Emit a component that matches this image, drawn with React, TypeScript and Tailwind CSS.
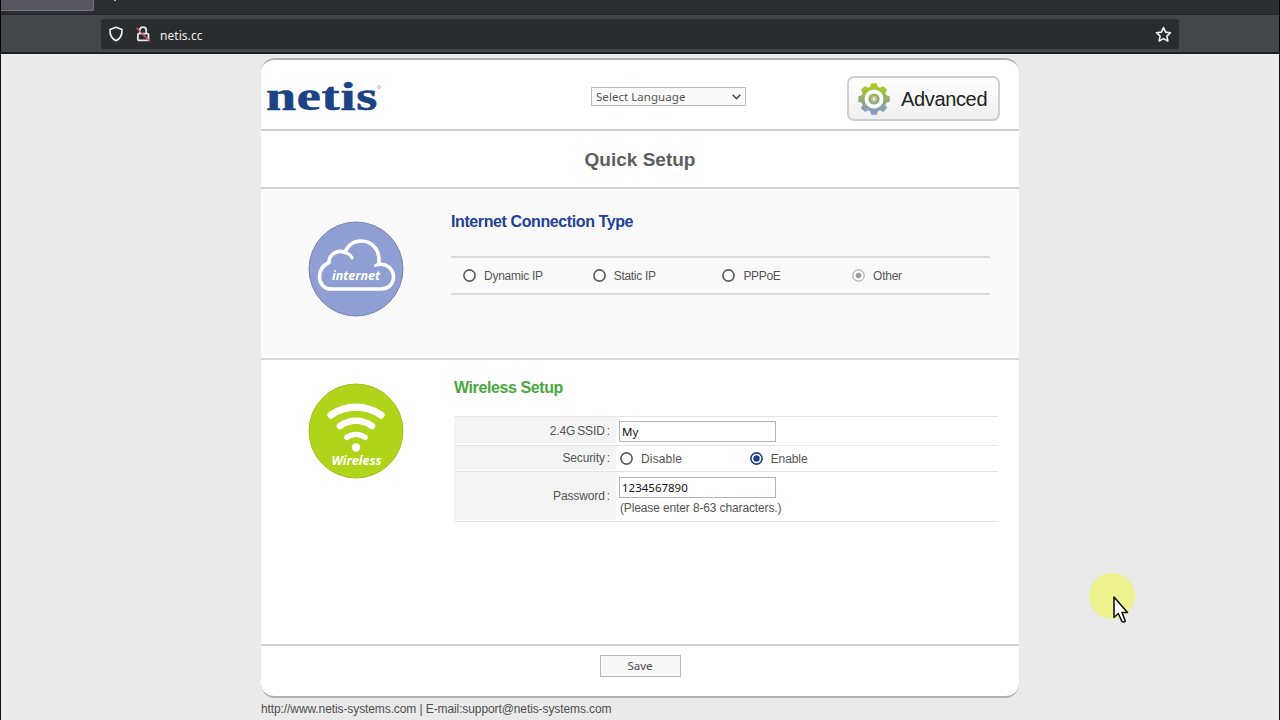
import { useState } from "react";

const connectionTypes = [
  { id: "dynamic", label: "Dynamic IP", tracking: "tracking-[-0.25px]" },
  { id: "static", label: "Static IP", tracking: "tracking-[-0.3px]" },
  { id: "pppoe", label: "PPPoE", tracking: "tracking-[-0.3px]" },
  { id: "other", label: "Other", tracking: "tracking-[-0.25px]", locked: true },
];

export default function App() {
  return (
    <div className="flex h-[720px] w-[1280px] flex-col overflow-hidden bg-[#eaeaea] font-['Liberation_Sans',sans-serif] text-xs text-[#555]">
      <BrowserBar />
      <main className="relative flex-1 border-x border-[#151515] px-[260px] pt-1">
        <QuickSetup />
        <footer className="mt-1 text-xs leading-[15px] tracking-[-0.1px] whitespace-nowrap text-[#505050]">
          http://www.netis-systems.com | E-mail:support@netis-systems.com
        </footer>
        <Pointer />
      </main>
    </div>
  );
}

function BrowserBar() {
  return (
    <header className="flex h-[54px] flex-col border-x border-b-2 border-black border-b-[#1d1f21] bg-[#43464b]">
      <div className="flex h-[15px] border-b border-[#222527] bg-[#2c2f32]">
        <div className="h-[11px] w-[93px] rounded-br-[2px] border-r border-b border-[#74747e] bg-[#575761]" />
        <div className="ml-5 h-[1px] w-[2px] bg-[#b0b0b0]" />
      </div>
      <div className="flex flex-1 items-start pt-1 pl-[100px]">
        <div className="flex h-[30px] w-[1078px] items-center rounded-[3px] bg-[#2a2d2f] pr-[7px] pl-[7px]">
          <ShieldIcon />
          <InsecureLockIcon />
          <span className="ml-[9px] flex-1 pt-[3px] font-['Noto_Sans',sans-serif] text-xs tracking-[0.05px] text-[#eeeeee]">netis.cc</span>
          <StarIcon />
        </div>
      </div>
    </header>
  );
}

function QuickSetup() {
  const [connection, setConnection] = useState("other");
  const [security, setSecurity] = useState("enable");
  const [ssid, setSsid] = useState("My");
  const [password, setPassword] = useState("1234567890");

  return (
    <div className="flex h-[640px] w-[758px] flex-col overflow-hidden rounded-[14px] border-t-2 border-b-2 border-[#b0b0b0] bg-white">
      {/* Header */}
      <div className="flex h-[71px] border-b-2 border-[#cfcfcf]">
        <Logo />
        <div className="mt-[27px] ml-[209px] flex h-[19px] w-[155px] items-center justify-between border border-[#bdbdbd] bg-[#fafafa] pr-1 pl-1">
          <span className="font-['Noto_Sans',sans-serif] text-[11.5px] tracking-[0.05px] text-[#555]">Select Language</span>
          <svg width="9" height="6" viewBox="0 0 9 6" fill="none" stroke="#444" strokeWidth="1.4">
            <path d="M0.7 0.8L4.5 4.8L8.3 0.8" />
          </svg>
        </div>
        <button className="mt-4 ml-[101px] flex h-[45px] w-[153px] items-center rounded-[7px] border-2 border-[#d0d0d0] bg-linear-to-b from-white to-[#efefef] pl-[9px]">
          <GearIcon />
          <span className="ml-[11px] pt-px text-[20px] tracking-[-0.35px] text-[#222]">Advanced</span>
        </button>
      </div>

      <h1 className="flex h-[58px] items-center justify-center border-b-2 border-[#d0d0d0] pt-px text-[19px] font-bold text-[#5d5d5d]">
        Quick Setup
      </h1>

      {/* Internet */}
      <section className="flex h-[171px] border-b-2 border-[#d8d8d8] bg-[#fafafa] pl-[47px]">
        <InternetBadge />
        <div className="ml-[47px] w-[539px] pt-[23px]">
          <h2 className="text-base leading-5 font-bold tracking-[-0.4px] text-[#21409a]">Internet Connection Type</h2>
          <div className="mt-[24px] flex h-[39px] items-center border-y-2 border-[#dadbda] pl-3">
            {connectionTypes.map((type) => (
              <Radio
                key={type.id}
                label={type.label}
                tracking={type.tracking}
                checked={connection === type.id}
                disabled={type.locked}
                onSelect={() => setConnection(type.id)}
              />
            ))}
          </div>
        </div>
      </section>

      {/* Wireless */}
      <section className="flex h-[286px] border-b-2 border-[#d4d4d4] pl-[47px]">
        <WirelessBadge />
        <div className="ml-[50px] w-[544px] pt-[18px]">
          <h2 className="text-base leading-5 font-bold tracking-[-0.4px] text-[#47a83b]">Wireless Setup</h2>
          <div className="mt-[18px] border-t border-[#e4e4e4]">
            <FieldRow label="2.4G SSID :" height="h-[29px]">
              <div className="flex pt-px">
                <TextField value={ssid} onChange={setSsid} />
              </div>
            </FieldRow>
            <FieldRow label="Security :" height="h-[26px]">
              <div className="flex pl-px">
                <Radio label="Disable" tracking="tracking-[0.15px]" checked={security === "disable"} onSelect={() => setSecurity("disable")} />
                <Radio label="Enable" tracking="tracking-[-0.1px]" checked={security === "enable"} onSelect={() => setSecurity("enable")} />
              </div>
            </FieldRow>
            <FieldRow label="Password :" height="h-[50px]">
              <TextField value={password} onChange={setPassword} />
              <p className="mt-px pl-px leading-[18px] tracking-[-0.13px]">(Please enter 8-63 characters.)</p>
            </FieldRow>
          </div>
        </div>
      </section>

      <div className="flex justify-center pt-[9px]">
        <button className="h-[22px] w-[81px] border border-[#b9b9b9] bg-[#f8f8f8] font-['Noto_Sans',sans-serif] text-[11.5px] text-[#4a4a4a]">
          Save
        </button>
      </div>
    </div>
  );
}

function FieldRow({ label, height, children }) {
  return (
    <div className={`flex border-b border-[#e4e4e4] ${height}`}>
      <div className="mb-px flex w-[162px] items-center justify-end bg-[#f2f3f2] pr-[6px] tracking-[-0.12px] [word-spacing:-1.2px]">
        {label}
      </div>
      <div className="flex flex-1 flex-col justify-center pl-[3px]">{children}</div>
    </div>
  );
}

function TextField({ value, onChange }) {
  return (
    <input
      type="text"
      value={value}
      onChange={(e) => onChange(e.target.value)}
      className="h-[21px] w-[157px] border border-[#b5b5b5] bg-white pl-[2px] font-['Noto_Sans',sans-serif] text-[11.5px] text-[#111] outline-none"
    />
  );
}

function Radio({ label, tracking, checked, disabled = false, onSelect }) {
  const color = disabled ? "#9b9b9b" : checked ? "#1f3f8f" : "#5a5a5a";
  return (
    <label className="flex w-[129.7px] items-center">
      <input type="radio" className="sr-only" checked={checked} disabled={disabled} onChange={onSelect} />
      <svg width="13" height="13" viewBox="0 0 13 13">
        <circle cx="6.5" cy="6.5" r={disabled ? 5.7 : 5.6} fill="#fff" stroke={color} strokeWidth={disabled ? 1 : 1.6} />
        {checked && <circle cx="6.5" cy="6.5" r={disabled ? 2.8 : 3.2} fill={color} />}
      </svg>
      <span className={`ml-2 leading-4 ${tracking}`}>{label}</span>
    </label>
  );
}

function Logo() {
  return (
    <svg className="mt-[9px] ml-[4px] shrink-0" width="117" height="56" viewBox="0 0 117 56">
      <text
        x="1"
        y="41"
        textLength="112"
        lengthAdjust="spacingAndGlyphs"
        fill="#1b4284"
        stroke="#1b4284"
        strokeWidth="0.6"
        fontFamily="'Liberation Serif', serif"
        fontWeight="bold"
        fontSize="41"
        letterSpacing="0.6"
      >
        netis
      </text>
      <circle cx="114" cy="18" r="1.4" fill="none" stroke="#a5a5a5" strokeWidth="0.8" />
    </svg>
  );
}

function GearIcon() {
  return (
    <svg width="32" height="32" viewBox="-16.5 -16.5 33 33">
      <defs>
        <linearGradient id="gear" x1="0" y1="0" x2="0" y2="1">
          <stop offset="0.1" stopColor="#a9cf1c" />
          <stop offset="0.5" stopColor="#95ad6a" />
          <stop offset="0.9" stopColor="#849bc6" />
        </linearGradient>
        <mask id="teeth">
          <circle r="13.2" fill="#fff" />
          {[0, 45, 90, 135, 180, 225, 270, 315].map((angle) => (
            <path key={angle} d="M-4 -12L-2.9 -16.2H2.9L4 -12Z" fill="#fff" transform={`rotate(${angle})`} />
          ))}
          <circle r="9.8" fill="#000" />
          <circle r="5.8" fill="#fff" />
          <circle r="3.2" fill="#aaa" />
          <circle r="1.2" fill="#222" />
        </mask>
      </defs>
      <circle r="11" fill="#fff" />
      <rect x="-17" y="-17" width="34" height="34" fill="url(#gear)" mask="url(#teeth)" />
    </svg>
  );
}

function InternetBadge() {
  return (
    <svg className="mt-8 shrink-0" width="96" height="96" viewBox="0 0 96 96">
      <circle cx="48" cy="48" r="47" fill="#8f9fd3" stroke="#7c87b0" strokeWidth="1" />
      <path
        d="M23 68C16 68 11.5 62.5 11.5 56C11.5 49 15.5 44 21 41.5C21 33.5 29 28 37 31.5C40 24 46 20 53 20C64 20 71 28.5 71 39C71 40.5 71 42 70.5 43.5C79 42 85.5 48.5 85.5 56C85.5 63 80 68 73 68Z"
        fill="none"
        stroke="#fff"
        strokeWidth="3.6"
        strokeLinejoin="round"
      />
      <path
        d="M37 31.5C40.5 32.5 43 34.5 44 37M70.5 43.5C69.5 43.7 68.5 44 67.5 44.5"
        fill="none"
        stroke="#fff"
        strokeWidth="3"
        strokeLinecap="round"
      />
      <text x="24" y="58.5" textLength="48" lengthAdjust="spacingAndGlyphs" fill="#fff" fontFamily="'Open Sans', sans-serif" fontSize="12.5" fontWeight="bold" fontStyle="italic">
        internet
      </text>
    </svg>
  );
}

function WirelessBadge() {
  return (
    <svg className="mt-[23px] shrink-0" width="96" height="96" viewBox="0 0 96 96">
      <circle cx="48" cy="48" r="47" fill="#b0d41a" stroke="#a3c31f" strokeWidth="1" />
      <g fill="none" stroke="#fff" strokeLinecap="round">
        <path d="M23 32C38 21.5 58 21.5 73 32" strokeWidth="7.2" />
        <path d="M32 43C41.5 36 54.5 36 64 43" strokeWidth="6.6" />
        <path d="M39 54.3C44.5 50.5 51.5 50.5 57 54.3" strokeWidth="5.6" />
      </g>
      <circle cx="48" cy="64.5" r="4.2" fill="#fff" />
      <text x="23.5" y="82" textLength="50" lengthAdjust="spacingAndGlyphs" fill="#fff" fontFamily="'Open Sans', sans-serif" fontSize="12.5" fontWeight="bold" fontStyle="italic">
        Wireless
      </text>
    </svg>
  );
}

function Pointer() {
  return (
    <svg className="pointer-events-none absolute top-[517px] left-[1087px]" width="50" height="54" viewBox="0 0 50 54">
      <circle cx="24" cy="25" r="23" fill="#eef28e" />
      <path
        d="M26 26V46.5L30.3 42.5L34 50.5Q35.5 51.7 37.3 50.2L34 41.5H39.5Z"
        fill="#fff"
        stroke="#111"
        strokeWidth="1.6"
        strokeLinejoin="round"
      />
    </svg>
  );
}

function ShieldIcon() {
  return (
    <svg width="16" height="16" viewBox="0 0 16 16" fill="none" stroke="#f0f0f0" strokeWidth="1.6" strokeLinejoin="round">
      <path d="M8 1.2L14 3.5C14.3 9 12.5 12.6 8 14.8C3.5 12.6 1.7 9 2 3.5Z" />
    </svg>
  );
}

function InsecureLockIcon() {
  return (
    <svg className="ml-[11px]" width="16" height="16" viewBox="0 0 16 16" fill="none" stroke="#e6e6e6" strokeWidth="1.8">
      <path d="M4.8 7.7V4.4A3.2 3.2 0 0 1 11.2 4.4V7.7" />
      <rect x="2.9" y="7.7" width="10.6" height="6.6" rx="1" />
      <path d="M1.5 2L14.8 15.3" stroke="#d8566b" strokeWidth="1.5" />
    </svg>
  );
}

function StarIcon() {
  return (
    <svg width="17" height="17" viewBox="0 0 16 16" fill="none" stroke="#f2f2f2" strokeWidth="1.5" strokeLinejoin="round">
      <path d="M8 1.5L10 5.8L14.6 6.3L11.2 9.5L12.1 14.2L8 11.9L3.9 14.2L4.8 9.5L1.4 6.3L6 5.8Z" />
    </svg>
  );
}
